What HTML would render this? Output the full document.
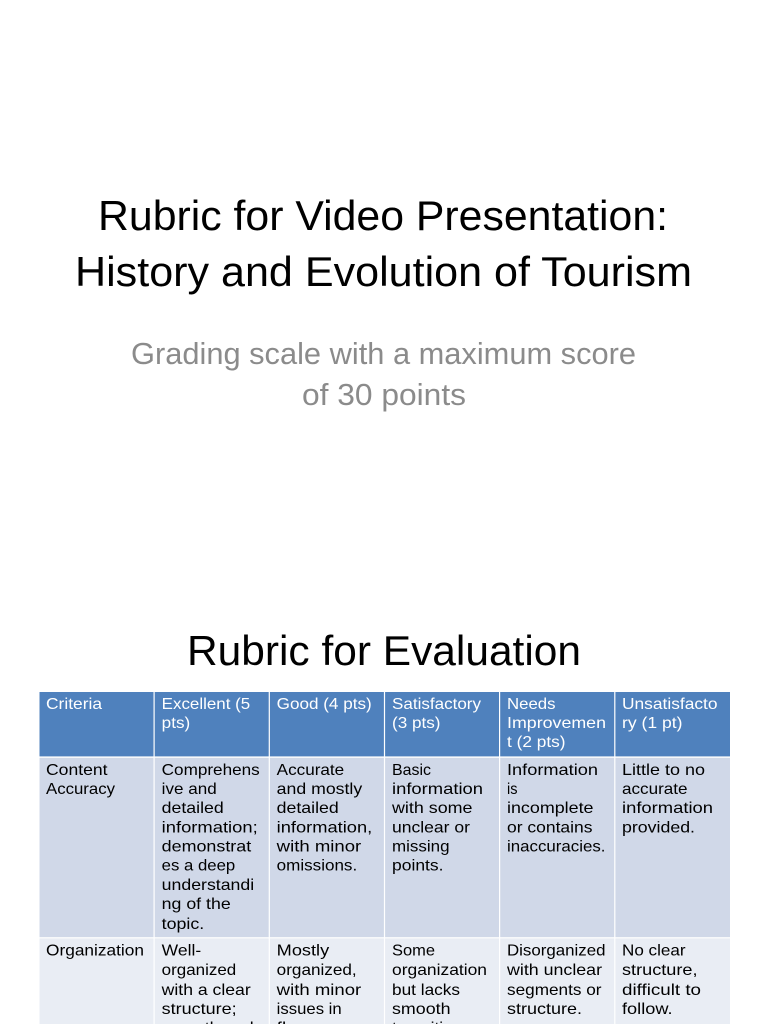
<!DOCTYPE html>
<html><head><meta charset="utf-8"><title>Rubric for Video Presentation</title>
<style>
html,body{margin:0;padding:0;background:#fff;width:768px;height:1024px;overflow:hidden}
svg{display:block}
text{font-family:"Liberation Sans",sans-serif}
.t{font-size:41.5px;fill:#000}
.s{font-size:30.5px;fill:#8b8b8b}
.h text{font-size:16px;fill:#fff}
.b text{font-size:16px;fill:#000}
</style></head><body>
<svg xmlns="http://www.w3.org/2000/svg" width="768" height="1024" viewBox="0 0 768 1024" lengthAdjust="spacingAndGlyphs">
<rect width="768" height="1024" fill="#fff"/>
<text class="t" x="98" y="230" textLength="570" lengthAdjust="spacingAndGlyphs">Rubric for Video Presentation:</text>
<text class="t" x="75" y="286" textLength="617" lengthAdjust="spacingAndGlyphs">History and Evolution of Tourism</text>
<text class="s" x="131" y="364" textLength="505" lengthAdjust="spacingAndGlyphs">Grading scale with a maximum score</text>
<text class="s" x="302" y="405" textLength="164" lengthAdjust="spacingAndGlyphs">of 30 points</text>
<text class="t" x="187" y="665" textLength="394" lengthAdjust="spacingAndGlyphs">Rubric for Evaluation</text>

<rect x="39.5" y="692" width="690.5" height="65" fill="#4f81bd"/>
<rect x="39.5" y="757" width="690.5" height="181" fill="#d0d8e8"/>
<rect x="39.5" y="938" width="690.5" height="86" fill="#e9edf4"/>
<g fill="#fff">
<rect x="153.5" y="692" width="1.2" height="332"/>
<rect x="268.7" y="692" width="1.2" height="332"/>
<rect x="383.9" y="692" width="1.2" height="332"/>
<rect x="499" y="692" width="1.2" height="332"/>
<rect x="614.2" y="692" width="1.2" height="332"/>
<rect x="39.5" y="756.4" width="690.5" height="1.4"/>
<rect x="39.5" y="937.2" width="690.5" height="1.2"/>
</g>

<g class="h">
<text x="46" y="709" textLength="56" lengthAdjust="spacingAndGlyphs">Criteria</text>
<text x="161.7" y="709" textLength="88.5" lengthAdjust="spacingAndGlyphs">Excellent (5</text>
<text x="161.7" y="728" textLength="28.5" lengthAdjust="spacingAndGlyphs">pts)</text>
<text x="276.7" y="709" textLength="95" lengthAdjust="spacingAndGlyphs">Good (4 pts)</text>
<text x="392" y="709" textLength="89" lengthAdjust="spacingAndGlyphs">Satisfactory</text>
<text x="392" y="728" textLength="48.5" lengthAdjust="spacingAndGlyphs">(3 pts)</text>
<text x="507" y="709" textLength="48.5" lengthAdjust="spacingAndGlyphs">Needs</text>
<text x="507" y="728" textLength="99" lengthAdjust="spacingAndGlyphs">Improvemen</text>
<text x="507" y="747" textLength="58.5" lengthAdjust="spacingAndGlyphs">t (2 pts)</text>
<text x="622" y="709" textLength="95.5" lengthAdjust="spacingAndGlyphs">Unsatisfacto</text>
<text x="622" y="728" textLength="60.5" lengthAdjust="spacingAndGlyphs">ry (1 pt)</text>
</g>

<g class="b">
<text x="46" y="775" textLength="61.5" lengthAdjust="spacingAndGlyphs">Content</text>
<text x="46" y="794" textLength="69" lengthAdjust="spacingAndGlyphs">Accuracy</text>

<text x="161.7" y="775" textLength="98" lengthAdjust="spacingAndGlyphs">Comprehens</text>
<text x="161.7" y="794" textLength="55" lengthAdjust="spacingAndGlyphs">ive and</text>
<text x="161.7" y="813" textLength="62" lengthAdjust="spacingAndGlyphs">detailed</text>
<text x="161.7" y="832.5" textLength="96" lengthAdjust="spacingAndGlyphs">information;</text>
<text x="161.7" y="851.5" textLength="89.5" lengthAdjust="spacingAndGlyphs">demonstrat</text>
<text x="161.7" y="870.5" textLength="73.5" lengthAdjust="spacingAndGlyphs">es a deep</text>
<text x="161.7" y="890" textLength="92.5" lengthAdjust="spacingAndGlyphs">understandi</text>
<text x="161.7" y="909" textLength="69" lengthAdjust="spacingAndGlyphs">ng of the</text>
<text x="161.7" y="929" textLength="42.5" lengthAdjust="spacingAndGlyphs">topic.</text>

<text x="276.7" y="775" textLength="67.5" lengthAdjust="spacingAndGlyphs">Accurate</text>
<text x="276.7" y="794" textLength="85.5" lengthAdjust="spacingAndGlyphs">and mostly</text>
<text x="276.7" y="813" textLength="62" lengthAdjust="spacingAndGlyphs">detailed</text>
<text x="276.7" y="832.5" textLength="95.5" lengthAdjust="spacingAndGlyphs">information,</text>
<text x="276.7" y="851.5" textLength="84.5" lengthAdjust="spacingAndGlyphs">with minor</text>
<text x="276.7" y="870.5" textLength="80.5" lengthAdjust="spacingAndGlyphs">omissions.</text>

<text x="392" y="775" textLength="39" lengthAdjust="spacingAndGlyphs">Basic</text>
<text x="392" y="794" textLength="91" lengthAdjust="spacingAndGlyphs">information</text>
<text x="392" y="813" textLength="80.5" lengthAdjust="spacingAndGlyphs">with some</text>
<text x="392" y="832.5" textLength="78" lengthAdjust="spacingAndGlyphs">unclear or</text>
<text x="392" y="851.5" textLength="57.5" lengthAdjust="spacingAndGlyphs">missing</text>
<text x="392" y="870.5" textLength="51.5" lengthAdjust="spacingAndGlyphs">points.</text>

<text x="507" y="775" textLength="91" lengthAdjust="spacingAndGlyphs">Information</text>
<text x="507" y="794" textLength="10.5" lengthAdjust="spacingAndGlyphs">is</text>
<text x="507" y="813" textLength="86.5" lengthAdjust="spacingAndGlyphs">incomplete</text>
<text x="507" y="832.5" textLength="85.5" lengthAdjust="spacingAndGlyphs">or contains</text>
<text x="507" y="851.5" textLength="98.5" lengthAdjust="spacingAndGlyphs">inaccuracies.</text>

<text x="622" y="775" textLength="83" lengthAdjust="spacingAndGlyphs">Little to no</text>
<text x="622" y="794" textLength="65.5" lengthAdjust="spacingAndGlyphs">accurate</text>
<text x="622" y="813" textLength="91" lengthAdjust="spacingAndGlyphs">information</text>
<text x="622" y="832.5" textLength="73" lengthAdjust="spacingAndGlyphs">provided.</text>

<text x="46" y="955.5" textLength="98" lengthAdjust="spacingAndGlyphs">Organization</text>

<text x="161.7" y="955.5" textLength="39.5" lengthAdjust="spacingAndGlyphs">Well-</text>
<text x="161.7" y="975" textLength="74.5" lengthAdjust="spacingAndGlyphs">organized</text>
<text x="161.7" y="995" textLength="89" lengthAdjust="spacingAndGlyphs">with a clear</text>
<text x="161.7" y="1014" textLength="75" lengthAdjust="spacingAndGlyphs">structure;</text>
<text x="161.7" y="1033" textLength="92" lengthAdjust="spacingAndGlyphs">smooth and</text>

<text x="276.7" y="955.5" textLength="52.5" lengthAdjust="spacingAndGlyphs">Mostly</text>
<text x="276.7" y="975" textLength="80" lengthAdjust="spacingAndGlyphs">organized,</text>
<text x="276.7" y="995" textLength="84.5" lengthAdjust="spacingAndGlyphs">with minor</text>
<text x="276.7" y="1014" textLength="65" lengthAdjust="spacingAndGlyphs">issues in</text>
<text x="276.7" y="1033" textLength="38" lengthAdjust="spacingAndGlyphs">flow.</text>

<text x="392" y="955.5" textLength="43" lengthAdjust="spacingAndGlyphs">Some</text>
<text x="392" y="975" textLength="95" lengthAdjust="spacingAndGlyphs">organization</text>
<text x="392" y="995" textLength="68" lengthAdjust="spacingAndGlyphs">but lacks</text>
<text x="392" y="1014" textLength="58.5" lengthAdjust="spacingAndGlyphs">smooth</text>
<text x="392" y="1033" textLength="84" lengthAdjust="spacingAndGlyphs">transitions.</text>

<text x="507" y="955.5" textLength="98.5" lengthAdjust="spacingAndGlyphs">Disorganized</text>
<text x="507" y="975" textLength="95" lengthAdjust="spacingAndGlyphs">with unclear</text>
<text x="507" y="995" textLength="94.5" lengthAdjust="spacingAndGlyphs">segments or</text>
<text x="507" y="1014" textLength="75" lengthAdjust="spacingAndGlyphs">structure.</text>

<text x="622" y="955.5" textLength="63.5" lengthAdjust="spacingAndGlyphs">No clear</text>
<text x="622" y="975" textLength="75.5" lengthAdjust="spacingAndGlyphs">structure,</text>
<text x="622" y="995" textLength="79" lengthAdjust="spacingAndGlyphs">difficult to</text>
<text x="622" y="1014" textLength="50.5" lengthAdjust="spacingAndGlyphs">follow.</text>
</g>
</svg>
</body></html>
